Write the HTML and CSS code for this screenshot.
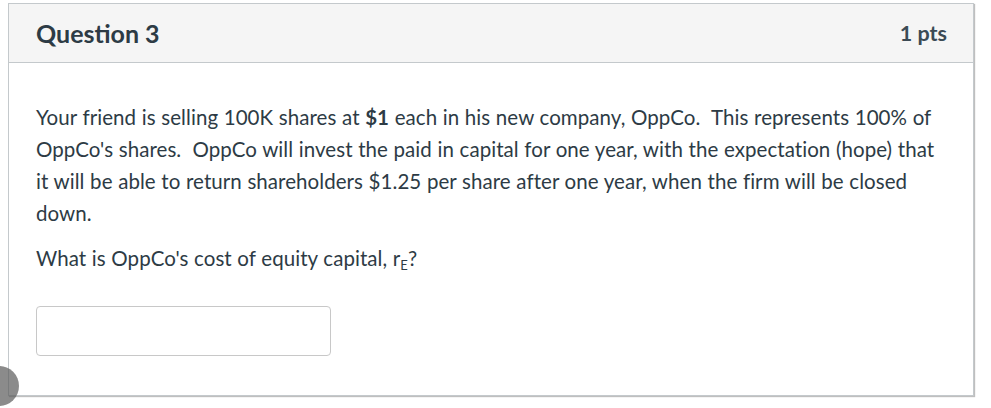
FILE: index.html
```html
<!DOCTYPE html>
<html lang="en">
<head>
<meta charset="utf-8">
<title>Question 3</title>
<link rel="stylesheet" href="styles.css">
</head>
<body>
<div class="card">
  <div class="card-header">
    <h2 class="title">Question 3</h2>
    <span class="points">1 pts</span>
  </div>
  <div class="card-body">
    <p class="text">Your friend is selling 100K shares at <b>$1</b> each in his new company, OppCo.&nbsp; This represents 100% of OppCo's shares.&nbsp; OppCo will invest the paid in capital for one year, with the expectation (hope) that it will be able to return shareholders $1.25 per share after one year, when the firm will be closed down.</p>
    <p class="text">What is OppCo's cost of equity capital, r<sub>E</sub>?</p>
    <input class="answer" type="text" aria-label="Answer">
  </div>
</div>
<div class="cursor-dot"></div>
</body>
</html>
```

FILE: styles.css
```css
html, body {
  margin: 0;
  padding: 0;
  background: #ffffff;
  font-family: Lato, "Open Sans", "Liberation Sans", sans-serif;
  color: #2d3b45;
}

body {
  padding: 3px 0 0 8px;
  height: 408px;
  box-sizing: border-box;
  overflow: hidden;
}

.card {
  width: 966px;
  box-sizing: border-box;
  border: 1px solid #c4c9cc;
  box-shadow: 1px 1px 1px rgba(0, 0, 0, 0.25);
  background: #fff;
}

.card-header {
  height: 58px;
  background: #f5f5f5;
  border-bottom: 1px solid #c4c9cc;
  display: flex;
  align-items: center;
  justify-content: space-between;
  padding: 0 26px 0 27px;
}

.title {
  margin: 0;
  font-size: 25px;
  font-weight: 700;
  color: #2d3b45;
}

.points {
  font-size: 21.5px;
  font-weight: 700;
  color: #3b4a54;
}

.card-body {
  padding: 38px 30px 39px 27px;
}

.text {
  margin: 0 0 13px 0;
  font-size: 20.5px;
  letter-spacing: 0.06px;
  word-spacing: 0.3px;
  line-height: 32px;
}

.text b {
  font-weight: 700;
}

.text sub {
  font-size: 13px;
  line-height: 0;
  vertical-align: -4px;
}

.answer {
  display: block;
  margin-top: 32px;
  width: 295px;
  height: 50px;
  box-sizing: border-box;
  border: 1px solid #c8c8c8;
  border-radius: 4px;
  background: #fff;
  font-family: inherit;
  font-size: 16px;
  padding: 0 10px;
}

.cursor-dot {
  position: absolute;
  left: -21px;
  top: 366px;
  width: 40px;
  height: 40px;
  border-radius: 50%;
  background: rgba(90, 90, 90, 0.7);
}
```
